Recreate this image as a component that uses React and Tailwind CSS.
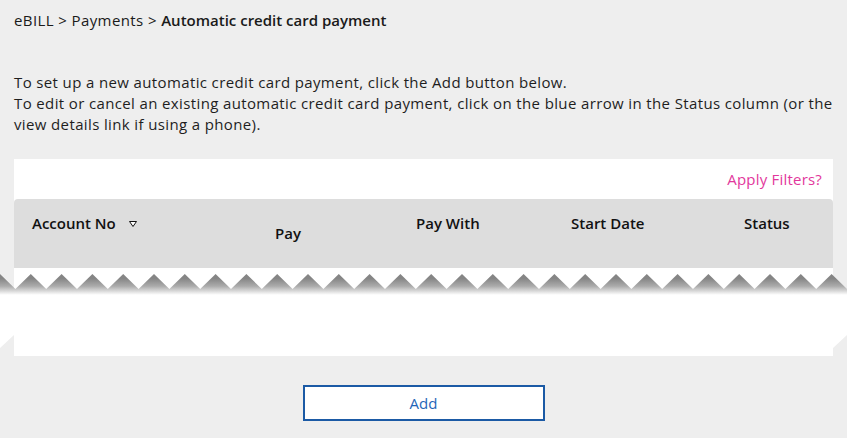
import React from "react";

const columns = [
	{ label: "Account No", sort: true },
	{ label: "Pay", middle: true },
	{ label: "Pay With" },
	{ label: "Start Date" },
	{ label: "Status" },
];

function SortIcon() {
	return (
		<svg width="8" height="6" viewBox="0 0 8 6" className="ml-[13px]">
			<polygon points="0.5,0.5 7.5,0.5 4,5.5" fill="#fff" stroke="#111" strokeWidth="1" />
		</svg>
	);
}

// torn paper edge between header and body
function TornEdge() {
	const period = 30.8;
	let d = "M0,21";
	for (let x = -15.4; x < 860; x += period) {
		d += ` L${(x + 15.4).toFixed(1)},6 L${(x + 30.8).toFixed(1)},21`;
	}
	d += " L847,28 L0,28 Z";
	return (
		<svg width="847" height="28" viewBox="0 0 847 28" className="block">
			<defs>
				<linearGradient id="tornShade" x1="0" y1="0" x2="0" y2="1">
					<stop offset="0.2" stopColor="#858585" />
					<stop offset="0.55" stopColor="#ababab" />
					<stop offset="0.78" stopColor="#dadada" />
					<stop offset="0.95" stopColor="#ffffff" />
				</linearGradient>
			</defs>
			<rect x="0" y="0" width="14" height="28" fill="#eeeeee" />
			<rect x="14" y="0" width="819" height="28" fill="#ffffff" />
			<rect x="833" y="0" width="14" height="28" fill="#eeeeee" />
			<path d={d} fill="url(#tornShade)" />
		</svg>
	);
}

export default function App() {
	return (
		<div
			className="min-h-[438px] w-[847px] bg-[#eeeeee] text-[15px] leading-[21px] text-[#1a1a1a]"
			style={{ fontFamily: "'Open Sans', sans-serif" }}>
			<div className="px-[14px] pt-[10px]">
				<div>
					<span className="tracking-[0.4px]">eBILL &gt; Payments &gt; </span>
					<span className="font-semibold">Automatic credit card payment</span>
				</div>
				<div className="mt-[41px] tracking-[0.37px] text-[#1e1e1e]">
					<div>To set up a new automatic credit card payment, click the Add button below.</div>
					<div className="whitespace-nowrap">
						To edit or cancel an existing automatic credit card payment, click on the blue arrow in the Status column (or the
					</div>
					<div>view details link if using a phone).</div>
				</div>
			</div>

			{/* table panel */}
			<div className="mx-[14px] mt-[24px] bg-white">
				<div className="flex h-[40px] items-center justify-end pr-[11px] tracking-[0.2px] text-[#e2379c]">
					Apply Filters?
				</div>
				<div className="grid h-[69px] grid-cols-[261px_141px_155px_173px_1fr] rounded-t-[4px] bg-[#dddddd] font-semibold text-[#111]">
					{columns.map((col, i) => (
						<div
							key={col.label}
							className={`flex items-center ${i === 0 ? "pl-[18px]" : ""} ${col.middle ? "self-center" : "self-start pt-[14px]"}`}>
							<span>{col.label}</span>
							{col.sort && <SortIcon />}
						</div>
					))}
				</div>
			</div>
			<TornEdge />
			<div className="h-[60px] bg-white [clip-path:polygon(0_0,100%_0,100%_39px,833px_52px,833px_100%,14px_100%,14px_39px,0_52px)]"></div>

			<div className="flex justify-center pt-[29px]">
				<button
					type="button"
					className="h-[36px] w-[242px] border-2 border-[#1b5aa5] bg-white text-[15px] text-[#1f66b8]">
					Add
				</button>
			</div>
		</div>
	);
}
